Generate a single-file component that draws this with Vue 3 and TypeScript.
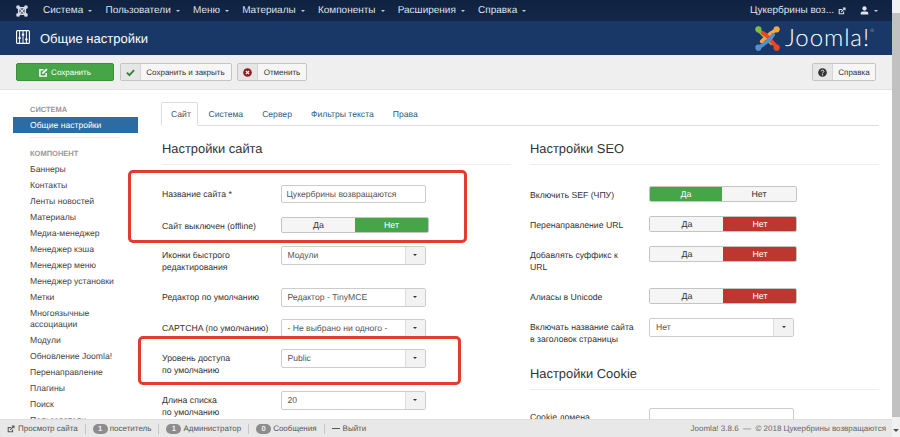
<script setup lang="ts">
interface Field { label: string[]; kind: 'input' | 'select' | 'toggle'; value?: string; on?: 'yes-green' | 'no-green' | 'no-red'; size: 'first' | 'short' | 'mid' | 'tall' }

const navItems = ['Система', 'Пользователи', 'Меню', 'Материалы', 'Компоненты', 'Расширения', 'Справка']
const sideItems = [
  ['Баннеры'], ['Контакты'], ['Ленты новостей'], ['Материалы'], ['Медиа-менеджер'], ['Менеджер кэша'], ['Менеджер меню'],
  ['Менеджер установки'], ['Метки'], ['Многоязычные', 'ассоциации'], ['Модули'], ['Обновление Joomla!'], ['Перенаправление'],
  ['Плагины'], ['Поиск'], ['Пользователи']
]
const tabs = ['Система', 'Сервер', 'Фильтры текста', 'Права']
const leftFields: Field[] = [
  { label: ['Название сайта *'], kind: 'input', value: 'Цукербрины возвращаются', size: 'first' },
  { label: ['Сайт выключен (offline)'], kind: 'toggle', on: 'no-green', size: 'short' },
  { label: ['Иконки быстрого', 'редактирования'], kind: 'select', value: 'Модули', size: 'tall' },
  { label: ['Редактор по умолчанию'], kind: 'select', value: 'Редактор - TinyMCE', size: 'mid' },
  { label: ['CAPTCHA (по умолчанию)'], kind: 'select', value: '- Не выбрано ни одного -', size: 'mid' },
  { label: ['Уровень доступа', 'по умолчанию'], kind: 'select', value: 'Public', size: 'tall' },
  { label: ['Длина списка', 'по умолчанию'], kind: 'select', value: '20', size: 'tall' }
]
const rightFields: Field[] = [
  { label: ['Включить SEF (ЧПУ)'], kind: 'toggle', on: 'yes-green', size: 'mid' },
  { label: ['Перенаправление URL'], kind: 'toggle', on: 'no-red', size: 'short' },
  { label: ['Добавлять суффикс к', 'URL'], kind: 'toggle', on: 'no-red', size: 'tall' },
  { label: ['Алиасы в Unicode'], kind: 'toggle', on: 'no-red', size: 'short' },
  { label: ['Включать название сайта', 'в заголовок страницы'], kind: 'select', value: 'Нет', size: 'tall' }
]
const statusItems = [
  { n: '1', t: 'посетитель' }, { n: '1', t: 'Администратор' }, { n: '0', t: 'Сообщения' }
]
</script>

<template>
  <div class="page">
    <div class="view">
      <nav class="nav">
        <svg class="nav-logo" viewBox="0 0 14 14" width="12" height="12">
          <rect x="3.2" y="3.2" width="7.6" height="7.6" fill="none" stroke="#d7dbe2" stroke-width="1.8" />
          <path d="M3 3L11 11M11 3L3 11" stroke="#d7dbe2" stroke-width="1.6" />
          <circle cx="2.4" cy="2.4" r="2.2" fill="#d7dbe2" /><circle cx="11.6" cy="2.4" r="2.2" fill="#d7dbe2" />
          <circle cx="2.4" cy="11.6" r="2.2" fill="#d7dbe2" /><circle cx="11.6" cy="11.6" r="2.2" fill="#d7dbe2" />
        </svg>
        <a v-for="n in navItems" :key="n" class="nav-item">{{ n }}<i class="caret"></i></a>
        <span class="nav-right">
          <span>Цукербрины воз...</span>
          <svg class="ext" viewBox="0 0 10 10" width="8" height="8"><path d="M7 5.5V8.5H1.5V3H5M4 6L8.5 1.5M6 1.2H8.8V4" stroke="#dfe3ea" stroke-width="1.3" fill="none" /></svg>
          <svg class="user" viewBox="0 0 10 10" width="9" height="9"><circle cx="5" cy="2.8" r="2.4" fill="#dfe3ea" /><path d="M.8 9.5V7.6C.8 6.5 2.4 6 5 6S9.2 6.5 9.2 7.6V9.5Z" fill="#dfe3ea" /></svg>
          <i class="caret"></i>
        </span>
      </nav>

      <header class="head">
        <svg class="head-icon" viewBox="0 0 14 14" width="14" height="14">
          <rect x=".6" y=".6" width="12.8" height="12.8" rx="1" fill="none" stroke="#fff" stroke-width="1.1" />
          <path d="M3.6 1V13M7 1V13M10.4 1V13" stroke="#fff" stroke-width="1" />
          <path d="M2.4 8.2H4.8M5.8 4.6H8.2M9.2 9.4H11.6" stroke="#fff" stroke-width="1.8" />
        </svg>
        <h1>Общие настройки</h1>
        <div class="brand">
          <svg viewBox="0 0 26 26" width="25" height="25">
            <g fill="none" stroke-width="3.8" stroke-linecap="round">
              <path d="M4 5 C7 7 9 10 13 14 L17 18" stroke="#7ac143" />
              <path d="M22 4 C18 6 14 9 10 13 L7 16" stroke="#f9a541" />
              <path d="M22 21 C19 18 15 13 11 9 L8 7" stroke="#f44321" />
              <path d="M4 22 C9 20 13 16 17 12 L19 9" stroke="#5091cd" />
            </g>
            <circle cx="3.5" cy="3.5" r="3.2" fill="#7ac143" />
            <circle cx="22.5" cy="3.5" r="3.2" fill="#f9a541" />
            <circle cx="22.5" cy="22.5" r="3.2" fill="#f44321" />
            <circle cx="3.5" cy="22.5" r="3.2" fill="#5091cd" />
          </svg>
          <span class="brand-text">Joomla!<sup>®</sup></span>
        </div>
      </header>

      <div class="toolbar">
        <button class="btn-save">
          <svg viewBox="0 0 10 10" width="9" height="9"><path d="M8 5.5V9H1V2H5" stroke="#fff" stroke-width="1.6" fill="none" /><path d="M3.5 6.5V5L8 .6 9.5 2 5 6.5Z" fill="#fff" /></svg>
          Сохранить
        </button>
        <button class="btn w112">
          <span class="btn-ic"><svg viewBox="0 0 10 10" width="9" height="9"><path d="M1 5.2L3.8 8 9 2.4" stroke="#378137" stroke-width="2.1" fill="none" /></svg></span>
          <span class="btn-tx">Сохранить и закрыть</span>
        </button>
        <button class="btn w70">
          <span class="btn-ic"><svg viewBox="0 0 10 10" width="9" height="9"><circle cx="5" cy="5" r="4.8" fill="#8f1d22" /><path d="M3.2 3.2L6.8 6.8M6.8 3.2L3.2 6.8" stroke="#fff" stroke-width="1.4" /></svg></span>
          <span class="btn-tx">Отменить</span>
        </button>
        <button class="btn w64 push">
          <span class="btn-ic"><svg viewBox="0 0 10 10" width="9" height="9"><circle cx="5" cy="5" r="4.8" fill="#333" /><path d="M3.5 3.8C3.6 2.8 4.3 2.4 5 2.4 5.9 2.4 6.6 3 6.6 3.7 6.6 4.7 5 4.8 5 6" stroke="#eee" stroke-width="1.1" fill="none" /><circle cx="5" cy="7.5" r=".7" fill="#eee" /></svg></span>
          <span class="btn-tx">Справка</span>
        </button>
      </div>

      <main class="main">
        <aside class="side">
          <div class="side-head">СИСТЕМА</div>
          <div class="side-active">Общие настройки</div>
          <div class="side-rule"></div>
          <div class="side-head second">КОМПОНЕНТ</div>
          <div v-for="s in sideItems" :key="s[0]" class="side-item">
            <div v-for="l in s" :key="l">{{ l }}</div>
          </div>
        </aside>

        <section class="content">
          <div class="tabs">
            <span class="tab active">Сайт</span>
            <span v-for="t in tabs" :key="t" class="tab">{{ t }}</span>
          </div>
          <div class="cols">
            <div class="col left">
              <h2>Настройки сайта</h2>
              <div v-for="f in leftFields" :key="f.label[0]" class="field" :class="f.size">
                <label><div v-for="l in f.label" :key="l">{{ l }}</div></label>
                <div v-if="f.kind === 'input'" class="input">{{ f.value }}</div>
                <div v-else-if="f.kind === 'select'" class="select"><span class="sel-v">{{ f.value }}</span><span class="sel-a"><i class="caret dark"></i></span></div>
                <div v-else class="toggle">
                  <span :class="{ green: f.on === 'yes-green' }">Да</span>
                  <span :class="{ green: f.on === 'no-green', red: f.on === 'no-red' }">Нет</span>
                </div>
              </div>
            </div>
            <div class="col right">
              <h2>Настройки SEO</h2>
              <div v-for="f in rightFields" :key="f.label[0]" class="field" :class="f.size">
                <label><div v-for="l in f.label" :key="l">{{ l }}</div></label>
                <div v-if="f.kind === 'select'" class="select"><span class="sel-v">{{ f.value }}</span><span class="sel-a"><i class="caret dark"></i></span></div>
                <div v-else class="toggle">
                  <span :class="{ green: f.on === 'yes-green' }">Да</span>
                  <span :class="{ green: f.on === 'no-green', red: f.on === 'no-red' }">Нет</span>
                </div>
              </div>
              <h2 class="h2-second">Настройки Cookie</h2>
              <div class="field mid">
                <label><div>Cookie домена</div></label>
                <div class="input"></div>
              </div>
            </div>
          </div>
          <div class="mark mark-a"></div>
          <div class="mark mark-b"></div>
        </section>
      </main>

      <footer class="status">
        <span class="st-item first">
          <svg viewBox="0 0 10 10" width="8" height="8"><path d="M7 5.5V8.5H1.5V3H5M4 6L8.5 1.5M6 1.2H8.8V4" stroke="#555" stroke-width="1.3" fill="none" /></svg>
          Просмотр сайта
        </span>
        <span v-for="s in statusItems" :key="s.t" class="st-item">
          <b class="badge">{{ s.n }}</b>{{ s.t }}
        </span>
        <span class="st-item last"><i class="minus"></i>Выйти</span>
        <span class="copy">Joomla! 3.8.6 &nbsp;—&nbsp; © 2018 Цукербрины возвращаются</span>
      </footer>
    </div>
    <div class="scroll">
      <div class="thumb"></div>
      <i class="scroll-arrow"></i>
    </div>
  </div>
</template>

<style>
html, body { margin: 0; overflow: hidden; }
</style>

<style scoped>
.page { display: flex; width: 900px; height: 437px; font-family: "Liberation Sans", Arial, sans-serif; font-size: 10px; color: #333; background: #fff; overflow: hidden; text-rendering: geometricPrecision; }
.view { width: 892px; display: flex; flex-direction: column; }
.scroll { width: 8px; background: #f1f1f1; display: flex; flex-direction: column; align-items: center; padding-top: 13px; box-sizing: border-box; }
.thumb { width: 8px; height: 404px; background: #c1c1c1; }
.scroll-arrow { margin-top: 12px; border-left: 3px solid transparent; border-right: 3px solid transparent; border-top: 3px solid #505050; }

.nav { height: 21px; flex: none; background: linear-gradient(#0f2240, #13274a); display: flex; align-items: center; color: #dfe3ea; font-size: 10px; padding-left: 16px; box-sizing: border-box; }
.nav-logo { margin-right: 15px; }
.nav-item { margin-right: 13.2px; white-space: nowrap; display: flex; align-items: center; }
.caret { display: inline-block; margin-left: 5px; border-left: 2.5px solid transparent; border-right: 2.5px solid transparent; border-top: 2.5px solid #c8ccd4; }
.caret.dark { border-top-color: #333; margin: 0; }
.nav-right { margin-left: auto; display: flex; align-items: center; padding-right: 14px; }
.ext { margin-left: 4px; }
.user { margin-left: 14px; }

.head { height: 34px; flex: none; background: #1a3867; display: flex; align-items: center; padding-left: 16px; padding-right: 17px; box-sizing: border-box; }
.head-icon { margin-right: 10px; margin-top: -3px; }
h1 { margin: 0; font-size: 13px; font-weight: 400; color: #fff; }
.brand { margin-left: auto; display: flex; align-items: center; gap: 5px; }
.brand-text { font-family: Lato, sans-serif; font-weight: 300; font-size: 24px; color: #fff; letter-spacing: .9px; line-height: 1; }
.brand-text sup { font-size: 5px; vertical-align: 14px; line-height: 0; color: #ccc; }

.toolbar { height: 35px; flex: none; background: #efefef; border-bottom: 1px solid #e2e2e2; box-sizing: border-box; display: flex; align-items: center; padding: 0 16px; gap: 5.5px; }
button { font-family: inherit; padding: 0; margin: 0; text-rendering: geometricPrecision; }
.btn-save { width: 98px; height: 18px; background: #46a546; border: 1px solid #3a8f3a; border-radius: 2px; color: #fff; font-size: 8px; display: flex; align-items: center; justify-content: center; gap: 3px; box-sizing: border-box; }
.btn { height: 18px; background: #f6f6f6; border: 1px solid #c4c4c4; border-radius: 2px; display: flex; box-sizing: border-box; font-size: 8px; color: #333; overflow: hidden; }
.w112 { width: 112px; }
.w70 { width: 70px; }
.w64 { width: 64px; }
.push { margin-left: auto; }
.btn-ic { width: 19px; background: #e6e6e6; border-right: 1px solid #d5d5d5; display: flex; align-items: center; justify-content: center; flex: none; }
.btn-tx { flex: 1; display: flex; align-items: center; justify-content: center; white-space: nowrap; }

.main { flex: 1; min-height: 0; display: flex; overflow: hidden; }
.side { width: 161px; flex: none; padding-top: 14px; box-sizing: border-box; font-size: 8.6px; color: #444; }
.side-head { padding-left: 30px; font-size: 7.5px; font-weight: 700; color: #999; height: 11px; line-height: 11px; }
.side-head.second { margin-top: 10px; margin-bottom: 5px; }
.side-active { margin: 2px 23px 0 13px; height: 16px; line-height: 16px; background: #2d6ca2; color: #fff; padding-left: 17px; }
.side-rule { height: 1px; background: #eee; margin: 4px 41px 0 30px; }
.side-item { padding-left: 30px; padding-bottom: 4.4px; line-height: 11.6px; white-space: nowrap; }

.content { flex: 1; position: relative; padding-top: 12px; min-width: 0; box-sizing: border-box; }
.tabs { display: flex; width: 718px; height: 24px; border-bottom: 1px solid #ddd; box-sizing: border-box; font-size: 8.6px; color: #2d5c88; }
.tab { padding: 0 9.5px; line-height: 24px; height: 24px; box-sizing: border-box; white-space: nowrap; }
.tab.active { padding: 0 9px; width: 37px; color: #555; background: #fff; border: 1px solid #ddd; border-bottom-color: #fff; border-radius: 2px 2px 0 0; line-height: 22px; margin-right: 1px; }
.cols { display: flex; gap: 19px; width: 718px; padding-left: 1px; box-sizing: border-box; }
.col { width: 349px; flex: none; }
h2 { margin: 13px 0 19.5px; font-size: 12.9px; font-weight: 400; color: #333; line-height: 20px; height: 25px; border-bottom: 1px solid #eee; box-sizing: content-box; }
.col.right > h2:first-child { margin-bottom: 20.5px; }
.h2-second { margin-top: 4px; margin-bottom: 18px; }
.field { display: flex; align-items: flex-start; }
.field.first { height: 32px; }
.field.mid { height: 30.5px; }
.field.short { height: 29.5px; }
.col.right .field.short { height: 30px; }
.field.tall { height: 42px; }
label { width: 118.5px; flex: none; font-size: 8.7px; line-height: 12.3px; color: #333; padding-top: 3px; white-space: nowrap; box-sizing: border-box; }
.col.right label { width: 119px; }
.input { width: 145px; height: 18.5px; line-height: 17px; box-sizing: border-box; border: 1px solid #ccc; border-radius: 2px; padding-left: 5px; font-size: 8.6px; color: #555; background: #fff; white-space: nowrap; overflow: hidden; }
.select { width: 145px; height: 18.5px; box-sizing: border-box; border: 1px solid #ccc; border-radius: 2px; display: flex; font-size: 8.6px; color: #555; background: #fff; }
.sel-v { flex: 1; line-height: 16.5px; padding-left: 6px; white-space: nowrap; overflow: hidden; }
.sel-a { width: 19px; background: #f2f2f2; border-left: 1px solid #ddd; display: flex; align-items: center; justify-content: center; }
.toggle { width: 148px; height: 16px; display: flex; box-sizing: border-box; font-size: 8.8px; line-height: 14px; text-align: center; color: #333; border-radius: 2px; overflow: hidden; border: 1px solid #c4c4c4; }
.toggle span { flex: 1; background: #f5f5f5; }
.toggle .green { background: #46a546; color: #fff; margin: -1px; line-height: 16px; }
.toggle .red { background: #bd362f; color: #fff; margin: -1px; line-height: 16px; }

.mark { position: absolute; border: 3px solid #e53a2f; border-radius: 5px; box-sizing: border-box; pointer-events: none; }
.mark-a { left: -33px; top: 80px; width: 339px; height: 73px; }
.mark-b { left: -23px; top: 246px; width: 323px; height: 49px; }

.status { height: 18px; flex: none; background: #e8e8e8; border-top: 1px solid #ddd; box-sizing: border-box; display: flex; align-items: center; font-size: 8px; color: #555; white-space: nowrap; padding-left: 7px; }
.st-item { display: flex; align-items: center; padding: 0 7px; border-right: 1px solid #c6c6c6; height: 10px; }
.st-item svg { margin-right: 3px; }
.st-item.first { padding-left: 0; }
.st-item.last { border-right: 0; }
.badge { display: inline-block; width: 15px; height: 10px; line-height: 10px; border-radius: 5px; background: #8c8c8c; color: #eee; text-align: center; font-size: 7.5px; font-weight: 700; margin-right: 2px; }
.minus { display: inline-block; width: 8px; height: 1.6px; background: #555; margin-right: 3px; }
.copy { margin-left: auto; padding-right: 6px; color: #666; font-size: 8px; }
</style>
